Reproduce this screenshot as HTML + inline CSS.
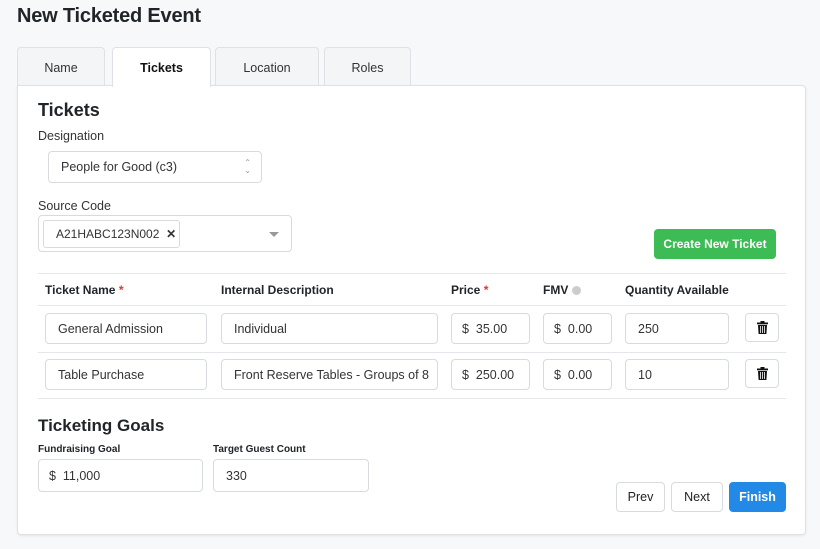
<!DOCTYPE html>
<html><head><style>
*{box-sizing:border-box;margin:0;padding:0}
body{width:820px;height:549px;background:#f7f8fa;font-family:"Liberation Sans",sans-serif;color:#212529;position:relative;overflow:hidden;font-size:12.5px}
.a{position:absolute}
h1{position:absolute;left:17px;top:5px;font-size:20px;font-weight:bold;letter-spacing:-0.2px}
.tab{position:absolute;top:47px;height:39px;border:1px solid #dee2e6;border-bottom:none;border-radius:4px 4px 0 0;background:#f4f5f7;text-align:center;line-height:40px;font-size:12.5px;color:#333}
.tab.act{background:#fff;font-weight:bold;color:#111;height:40px;z-index:2}
.card{position:absolute;left:17px;top:85px;width:789px;height:450px;background:#fff;border:1px solid #dee2e6;border-radius:0 4px 4px 4px;box-shadow:0 1px 2px rgba(0,0,0,.08)}
.in{position:absolute;border:1px solid #d7dbe0;border-radius:4px;background:#fff;font-size:12.5px;color:#333;padding-left:12px;display:flex;align-items:center;white-space:nowrap;overflow:hidden}
.lbl{position:absolute;font-size:12.5px;color:#333}
.th{position:absolute;top:283px;font-weight:bold;font-size:12px}
.red{color:#e3342f}
.hr{position:absolute;left:38px;width:748px;height:1px;background:#e3e6ea}
.btn{position:absolute;border:1px solid #d7dbe0;border-radius:4px;background:#fff;font-size:12.5px;display:flex;align-items:center;justify-content:center;color:#222}
.small{position:absolute;font-size:10px;font-weight:bold}
</style></head><body>
<h1>New Ticketed Event</h1>
<div class="tab" style="left:17px;width:88px">Name</div>
<div class="tab act" style="left:112px;width:99px">Tickets</div>
<div class="tab" style="left:215px;width:104px">Location</div>
<div class="tab" style="left:324px;width:87px">Roles</div>
<div class="card"></div>
<div class="a" style="left:38px;top:100px;font-size:18px;font-weight:bold">Tickets</div>
<div class="lbl" style="left:38px;top:129px">Designation</div>
<div class="in" style="left:48px;top:151px;width:214px;height:32px">People for Good (c3)<span class="a" style="right:10px;top:7px;font-size:8px;color:#999;line-height:8px">⌃<br>⌄</span></div>
<div class="lbl" style="left:38px;top:199px">Source Code</div>
<div class="in" style="left:38px;top:215px;width:254px;height:37px;padding-left:4px"><div style="border:1px solid #d7dbe0;border-radius:3px;height:28px;width:137px;display:flex;align-items:center;padding-left:12px;font-size:12px">A21HABC123N002&nbsp;&nbsp;<b style="font-size:12px">✕</b></div><span class="a" style="right:12px;top:16px;border:5px solid transparent;border-top-color:#999;border-bottom:none"></span></div>
<div class="a" style="left:654px;top:229px;width:122px;height:30px;background:#3dbb54;border-radius:4px;color:#fff;font-weight:bold;font-size:12px;text-align:center;line-height:30px">Create New Ticket</div>
<div class="hr" style="top:273px"></div>
<div class="th" style="left:45px">Ticket Name <span class="red">*</span></div>
<div class="th" style="left:221px">Internal Description</div>
<div class="th" style="left:451px">Price <span class="red">*</span></div>
<div class="th" style="left:543px">FMV <span style="display:inline-block;width:9px;height:9px;border-radius:50%;background:#ccc;vertical-align:-1px"></span></div>
<div class="th" style="left:625px">Quantity Available</div>
<div class="hr" style="top:305px"></div>
<div class="in" style="left:45px;top:313px;width:162px;height:31px">General Admission</div>
<div class="in" style="left:221px;top:313px;width:217px;height:31px">Individual</div>
<div class="in" style="left:451px;top:313px;width:79px;height:31px;padding-left:10px">$&nbsp; 35.00</div>
<div class="in" style="left:543px;top:313px;width:69px;height:31px;padding-left:10px">$&nbsp; 0.00</div>
<div class="in" style="left:625px;top:313px;width:104px;height:31px">250</div>
<div class="btn" style="left:745px;top:313px;width:34px;height:29px"><svg width="11" height="13" viewBox="0 0 11 13"><rect x="0" y="1.5" width="11" height="1.8" fill="#111"/><rect x="3.5" y="0" width="4" height="2" fill="#111"/><path d="M1 4h9l-.6 9H1.6z" fill="#111"/><path d="M3.5 5v7M5.5 5v7M7.5 5v7" stroke="#fff" stroke-width=".8"/></svg></div>
<div class="hr" style="top:352px"></div>
<div class="in" style="left:45px;top:359px;width:162px;height:31px">Table Purchase</div>
<div class="in" style="left:221px;top:359px;width:217px;height:31px">Front Reserve Tables - Groups of 8</div>
<div class="in" style="left:451px;top:359px;width:79px;height:31px;padding-left:10px">$&nbsp; 250.00</div>
<div class="in" style="left:543px;top:359px;width:69px;height:31px;padding-left:10px">$&nbsp; 0.00</div>
<div class="in" style="left:625px;top:359px;width:104px;height:31px">10</div>
<div class="btn" style="left:745px;top:359px;width:34px;height:29px"><svg width="11" height="13" viewBox="0 0 11 13"><rect x="0" y="1.5" width="11" height="1.8" fill="#111"/><rect x="3.5" y="0" width="4" height="2" fill="#111"/><path d="M1 4h9l-.6 9H1.6z" fill="#111"/><path d="M3.5 5v7M5.5 5v7M7.5 5v7" stroke="#fff" stroke-width=".8"/></svg></div>
<div class="hr" style="top:398px"></div>
<div class="a" style="left:38px;top:416px;font-size:17px;font-weight:bold">Ticketing Goals</div>
<div class="small" style="left:38px;top:444px">Fundraising Goal</div>
<div class="small" style="left:213px;top:444px">Target Guest Count</div>
<div class="in" style="left:38px;top:459px;width:165px;height:33px;padding-left:10px">$&nbsp; 11,000</div>
<div class="in" style="left:213px;top:459px;width:156px;height:33px">330</div>
<div class="btn" style="left:616px;top:482px;width:49px;height:30px">Prev</div>
<div class="btn" style="left:671px;top:482px;width:52px;height:30px">Next</div>
<div class="btn" style="left:729px;top:482px;width:57px;height:30px;background:#2389e6;border-color:#2389e6;color:#fff;font-weight:bold">Finish</div>
</body></html>
